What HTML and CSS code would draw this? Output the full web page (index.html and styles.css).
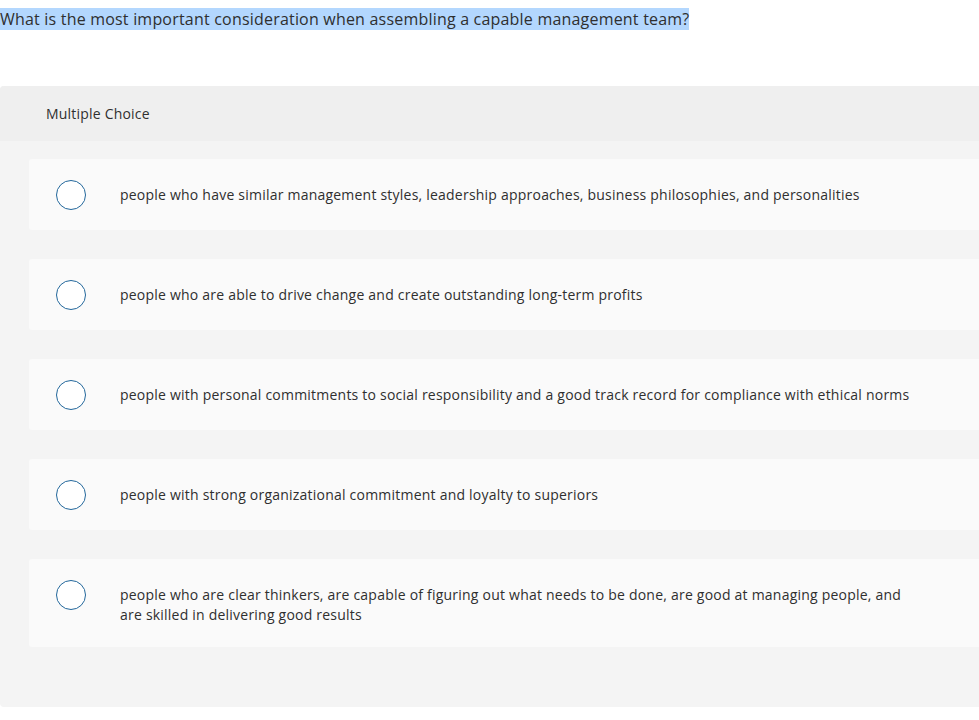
FILE: index.html
```html
<!DOCTYPE html>
<html lang="en">
<head>
<meta charset="utf-8">
<title>Multiple Choice</title>
<link rel="stylesheet" href="styles.css">
</head>
<body>
<h1 class="question"><span class="question-text">What is the most important consideration when assembling a capable management team?</span></h1>

<section class="panel">
  <header class="panel-head">Multiple Choice</header>
  <ul class="choices">
    <li class="choice">
      <span class="radio"></span>
      <span class="label">people who have similar management styles, leadership approaches, business philosophies, and personalities</span>
    </li>
    <li class="choice">
      <span class="radio"></span>
      <span class="label">people who are able to drive change and create outstanding long-term profits</span>
    </li>
    <li class="choice">
      <span class="radio"></span>
      <span class="label">people with personal commitments to social responsibility and a good track record for compliance with ethical norms</span>
    </li>
    <li class="choice">
      <span class="radio"></span>
      <span class="label">people with strong organizational commitment and loyalty to superiors</span>
    </li>
    <li class="choice">
      <span class="radio"></span>
      <span class="label">people who are clear thinkers, are capable of figuring out what needs to be done, are good at managing people, and are skilled in delivering good results</span>
    </li>
  </ul>
</section>
</body>
</html>
```

FILE: styles.css
```css
* { box-sizing: border-box; }

html, body {
  margin: 0;
  padding: 0;
  background: #ffffff;
}

body {
  font-family: "Open Sans", "Liberation Sans", sans-serif;
  color: #2f2f2f;
  overflow: hidden;
}

.question {
  margin: 0;
  padding-top: 9px;
  font-size: 16px;
  line-height: 20px;
  font-weight: 400;
  letter-spacing: 0.2px;
}

.question-text {
  background: #b3d7fe;
}

.panel {
  margin-top: 57px;
  background: #f4f4f4;
  border-radius: 4px 0 0 4px;
  padding-bottom: 60px;
}

.panel-head {
  background: #efefef;
  height: 55px;
  padding-left: 46px;
  display: flex;
  align-items: center;
  font-size: 14px;
  letter-spacing: 0.2px;
  border-radius: 4px 0 0 0;
}

.choices {
  list-style: none;
  margin: 0;
  padding: 18px 0 0 29px;
  display: flex;
  flex-direction: column;
  gap: 29px;
}

.choice {
  background: #fafafa;
  border-radius: 3px 0 0 3px;
  display: flex;
  align-items: flex-start;
  padding: 21px 60px 20px 27px;
}

.radio {
  flex: none;
  width: 30px;
  height: 30px;
  border-radius: 50%;
  border: 1.5px solid #22679b;
  background: #ffffff;
}

.label {
  margin-left: 34px;
  padding: 5px 0 2px;
  font-size: 14px;
  line-height: 20px;
  letter-spacing: 0.22px;
}
```
